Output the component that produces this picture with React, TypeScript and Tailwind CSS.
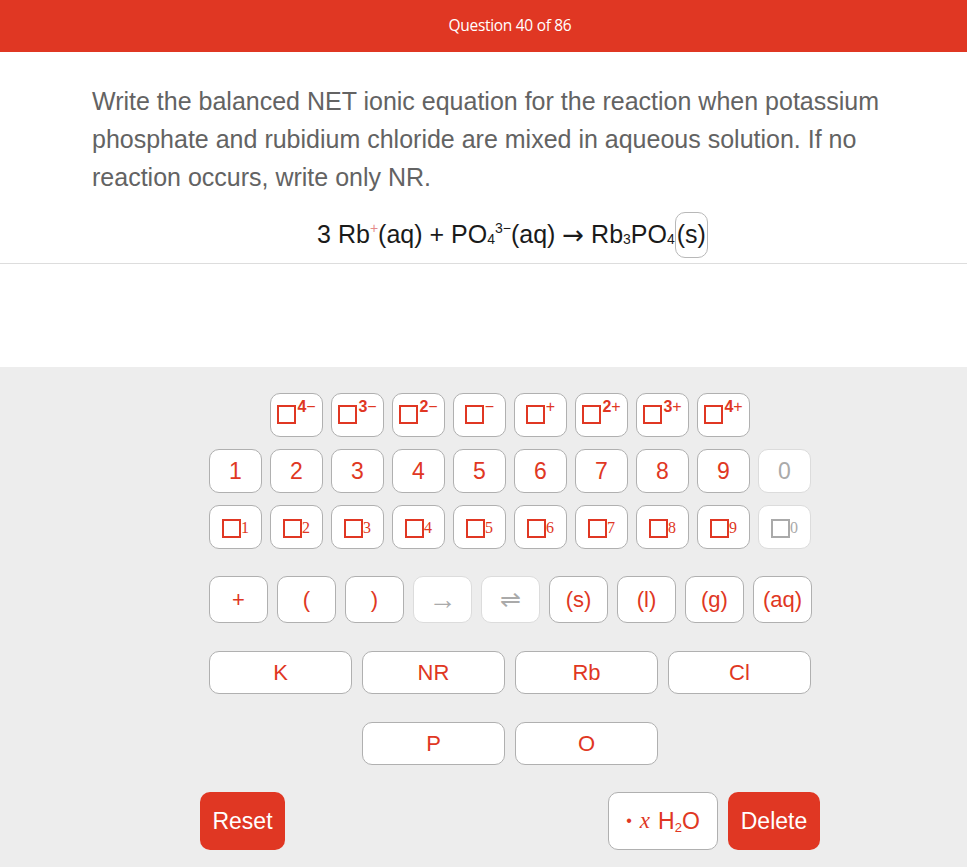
import React from 'react'

/* ── keypad pieces ───────────────────────────────────────────────── */

const RED = 'text-[#e03723]'

function Key({
  children,
  disabled,
  className = '',
}: {
  children: React.ReactNode
  disabled?: boolean
  className?: string
}) {
  return (
    <button
      type="button"
      className={`flex items-center justify-center rounded-[10px] border bg-white font-['Liberation_Sans',Arial,sans-serif] ${
        disabled ? 'border-[#dcdcdc] text-[#aaaaaa]' : 'border-[#b0b0b0] text-[#e03723]'
      } ${className}`}
    >
      {children}
    </button>
  )
}

function Box({ disabled }: { disabled?: boolean }) {
  return (
    <span
      className={`inline-block h-[19px] w-[19px] border-2 ${disabled ? 'border-[#aaaaaa]' : 'border-[#e03723]'}`}
    />
  )
}

const CHARGES = [
  ['4', '−'],
  ['3', '−'],
  ['2', '−'],
  ['', '−'],
  ['', '+'],
  ['2', '+'],
  ['3', '+'],
  ['4', '+'],
]
const DIGITS = ['1', '2', '3', '4', '5', '6', '7', '8', '9', '0']
const STATES = ['(s)', '(l)', '(g)', '(aq)']

/* ── main ────────────────────────────────────────────────────────── */

export default function App() {
  return (
    <div className="min-h-[867px] w-full bg-[#ededed] font-['Liberation_Sans',Arial,sans-serif]">
      {/* header */}
      <div className="flex h-[52px] items-center justify-center bg-[#e03723]">
        <span className="ml-[53px] font-['Open_Sans',sans-serif] text-[15.5px] tracking-[-0.3px] text-white">
          Question 40 of 86
        </span>
      </div>

      {/* question */}
      <div className="bg-white">
        <div className="px-[92px] pt-[30px]">
          <p className="w-[800px] text-[25px] leading-[38px] text-[#636363]">
            Write the balanced NET ionic equation for the reaction when potassium phosphate and rubidium chloride
            are mixed in aqueous solution. If no reaction occurs, write only NR.
          </p>
        </div>
        <div className="mt-[11px] flex h-[56px] items-center justify-center pl-[58px] text-[25px] text-[#1a1a1a]">
          <span>3 Rb</span>
          <sup className="text-[14px] text-[#e58a8a]">+</sup>
          <span>(aq) + PO</span>
          <sub className="text-[14px]">4</sub>
          <sup className="text-[14px]">3−</sup>
          <span>(aq)&nbsp;</span>
          <span className="font-['DejaVu_Sans',sans-serif] text-[26px] leading-none">→</span>
          <span>&nbsp;Rb</span>
          <sub className="text-[14px]">3</sub>
          <span>PO</span>
          <sub className="text-[14px]">4</sub>
          <span className="flex h-[46px] items-center rounded-[10px] border border-[#b8b8b8] px-[1px]">(s)</span>
        </div>
        <div className="h-[104px] border-t border-[#dddddd]" />
      </div>

      {/* keypad */}
      <div className="pt-[26px]">
        <div className="ml-[209px] w-[602px]">
          <div className="grid grid-cols-[repeat(10,53px)] gap-x-[8px] gap-y-[12px]">
            <div />
            {CHARGES.map(([n, s]) => (
              <Key key={n + s} className="h-[44px]">
                <span className="flex items-start gap-[1px]">
                  <span className="mt-[6px]"><Box /></span>
                  <span className="text-[16px] leading-[16px]">
                    <span className="font-bold">{n}</span>
                    <span>{s}</span>
                  </span>
                </span>
              </Key>
            ))}
            <div />
            {DIGITS.map(d => (
              <Key key={d} disabled={d === '0'} className="h-[44px] text-[23px]">
                {d}
              </Key>
            ))}
            {DIGITS.map(d => (
              <Key key={'s' + d} disabled={d === '0'} className="h-[44px]">
                <span className="flex items-end">
                  <Box disabled={d === '0'} />
                  <span className="-mb-[2px] font-['Liberation_Serif',serif] text-[16px]">{d}</span>
                </span>
              </Key>
            ))}
          </div>

          <div className="mt-[27px] grid grid-cols-[repeat(9,59px)] gap-x-[9px]">
            <Key className="h-[47px] text-[22px]">+</Key>
            <Key className="h-[47px] text-[22px]">(</Key>
            <Key className="h-[47px] text-[22px]">)</Key>
            <Key disabled className="h-[47px] font-['DejaVu_Sans',sans-serif] text-[28px]">→</Key>
            <Key disabled className="h-[47px] font-['DejaVu_Sans',sans-serif] text-[25px]">⇌</Key>
            {STATES.map(s => (
              <Key key={s} className="h-[47px] text-[22px]">{s}</Key>
            ))}
          </div>

          <div className="mt-[28px] grid grid-cols-[repeat(4,143px)] gap-x-[10px] gap-y-[28px]">
            <Key className="h-[43px] text-[22px]">K</Key>
            <Key className="h-[43px] text-[22px]">NR</Key>
            <Key className="h-[43px] text-[22px]">Rb</Key>
            <Key className="h-[43px] text-[22px]">Cl</Key>
            <div />
            <Key className="h-[43px] text-[22px]">P</Key>
            <Key className="h-[43px] text-[22px]">O</Key>
          </div>
        </div>

        {/* bottom row */}
        <div className="ml-[200px] mt-[27px] flex w-[620px] items-center">
          <button
            type="button"
            className="h-[58px] w-[85px] rounded-[10px] bg-[#e03723] text-[23px] text-white"
          >
            Reset
          </button>
          <div className="flex-1" />
          <button
            type="button"
            className={`flex h-[58px] w-[110px] items-center justify-center gap-[8px] rounded-[10px] border border-[#b0b0b0] bg-white text-[23px] ${RED}`}
          >
            <span className="text-[16px]">•</span>
            <span className="font-['Liberation_Serif',serif] italic">x</span>
            <span>
              H<sub className="text-[13px]">2</sub>O
            </span>
          </button>
          <button
            type="button"
            className="ml-[10px] h-[58px] w-[92px] rounded-[10px] bg-[#e03723] text-[23px] text-white"
          >
            Delete
          </button>
        </div>
      </div>
    </div>
  )
}
